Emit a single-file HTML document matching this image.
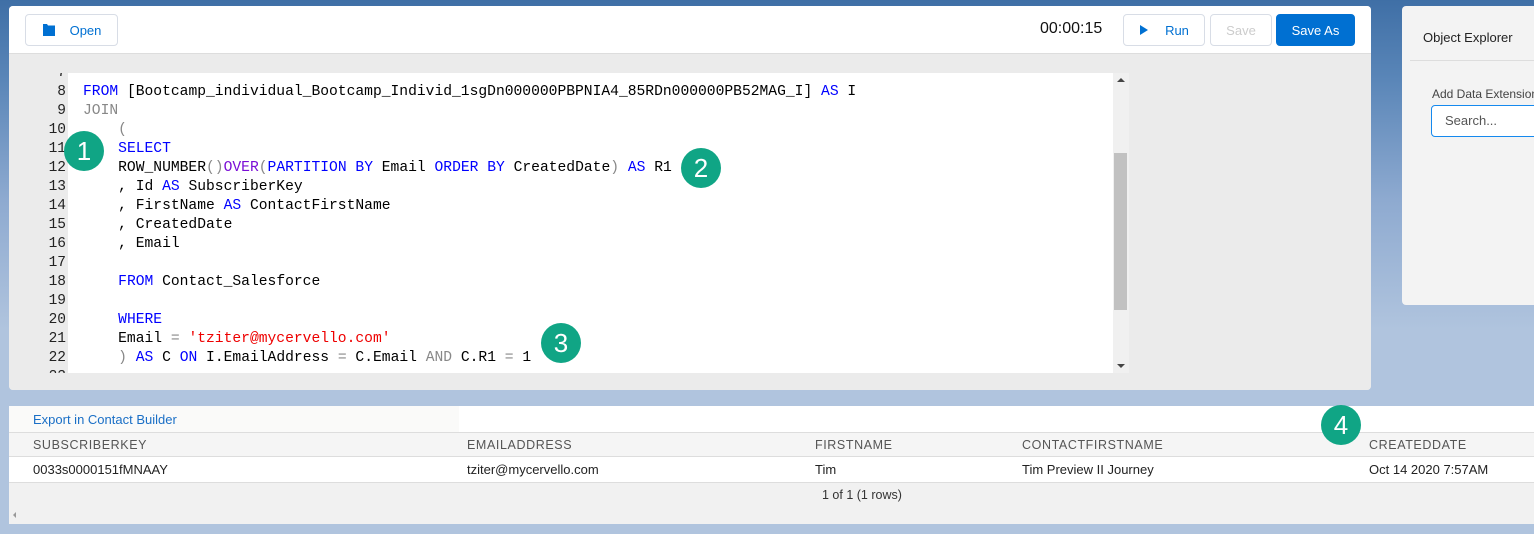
<!DOCTYPE html>
<html><head><style>
*{margin:0;padding:0;box-sizing:border-box}
body{width:1534px;height:534px;overflow:hidden;position:relative;font-family:"Liberation Sans",sans-serif;background:linear-gradient(180deg,#3f6fa6 0px,#5a86b8 80px,#8eaad0 200px,#b0c4de 330px,#b0c4de 534px)}
.a{position:absolute}
.btn{position:absolute;border:1px solid #d8dde6;border-radius:4px;background:#fff;font-size:13px;color:#0070d2;display:flex;align-items:center;justify-content:center}
.code{position:absolute;left:83px;font-family:"Liberation Mono",monospace;font-size:14.65px;line-height:19px;white-space:pre;color:#000}
.ln{position:absolute;left:30px;width:36px;text-align:right;font-family:"Liberation Mono",monospace;font-size:14.5px;line-height:19px;color:#222}
.k{color:#00f}.g{color:#888}.p{color:#7a0dd6}.s{color:#e00}
.c{position:absolute;width:40px;height:40px;border-radius:50%;background:#10a585;color:#fff;font-size:26px;display:flex;align-items:center;justify-content:center}
.th{position:absolute;top:438px;font-size:12.5px;letter-spacing:.6px;color:#555}
.td{position:absolute;top:462px;font-size:13px;color:#222}
</style></head><body>
<div class="a" style="left:9px;top:6px;width:1362px;height:384px;background:#ebebeb;border-radius:4px"></div>
<div class="a" style="left:9px;top:6px;width:1362px;height:48px;background:#fff;border-bottom:1px solid #ddd;border-radius:4px 4px 0 0"></div>
<div class="btn" style="left:25px;top:14px;width:93px;height:32px"><svg width="14" height="14" viewBox="0 0 14 14" style="margin-right:14px"><path d="M1 1h4l1 1.5h7V13H1z" fill="#0070d2"/></svg>Open</div>
<div class="a" style="left:1040px;top:20px;font-size:16px;color:#111">00:00:15</div>
<div class="btn" style="left:1123px;top:14px;width:82px;height:32px"><svg width="10" height="12" style="margin-right:16px"><path d="M1 1l8 5-8 5z" fill="#0070d2"/></svg>Run</div>
<div class="btn" style="left:1210px;top:14px;width:62px;height:32px;color:#ccc">Save</div>
<div class="btn" style="left:1276px;top:14px;width:79px;height:32px;background:#0070d2;border-color:#0070d2;color:#fff">Save As</div>
<div class="a" style="left:68px;top:73px;width:1061px;height:300px;background:#fff;overflow:hidden">
<div class="a" style="right:0;top:0;width:16px;height:300px;background:#f0f0f0"></div>
<div class="a" style="right:2px;top:80px;width:13px;height:157px;background:#c1c1c1"></div>
<div class="a" style="right:4px;top:5px;width:0;height:0;border:4px solid transparent;border-bottom-color:#444;border-top:0"></div>
<div class="a" style="right:4px;bottom:5px;width:0;height:0;border:4px solid transparent;border-top-color:#444;border-bottom:0"></div>
</div>
<div class="a" style="left:0;top:73px;width:68px;height:300px;overflow:hidden">
<div class="ln" style="top:-9px">7<br>8<br>9<br>10<br>11<br>12<br>13<br>14<br>15<br>16<br>17<br>18<br>19<br>20<br>21<br>22<br>23</div>
</div>
<div class="code" style="top:83px"><span class="k">FROM</span> [Bootcamp_individual_Bootcamp_Individ_1sgDn000000PBPNIA4_85RDn000000PB52MAG_I] <span class="k">AS</span> I
<span class="g">JOIN</span>
    <span class="g">(</span>
    <span class="k">SELECT</span>
    ROW_NUMBER<span class="g">()</span><span class="p">OVER</span><span class="g">(</span><span class="k">PARTITION BY</span> Email <span class="k">ORDER BY</span> CreatedDate<span class="g">)</span> <span class="k">AS</span> R1
    , Id <span class="k">AS</span> SubscriberKey
    , FirstName <span class="k">AS</span> ContactFirstName
    , CreatedDate
    , Email

    <span class="k">FROM</span> Contact_Salesforce

    <span class="k">WHERE</span>
    Email <span class="g">=</span> <span class="s">'tziter@mycervello.com'</span>
    <span class="g">)</span> <span class="k">AS</span> C <span class="k">ON</span> I.EmailAddress <span class="g">=</span> C.Email <span class="g">AND</span> C.R1 <span class="g">=</span> 1</div>
<div class="a" style="left:9px;top:373px;width:1362px;height:17px;background:#ebebeb;border-radius:0 0 4px 4px"></div>
<div class="a" style="left:1402px;top:6px;width:140px;height:299px;background:#f3f3f3;border-radius:4px"></div>
<div class="a" style="left:1423px;top:30px;font-size:13px;color:#222">Object Explorer</div>
<div class="a" style="left:1410px;top:60px;width:130px;height:1px;background:#ddd"></div>
<div class="a" style="left:1432px;top:87px;font-size:12px;color:#444;white-space:nowrap">Add Data Extension</div>
<div class="a" style="left:1431px;top:105px;width:110px;height:32px;background:#fff;border:1px solid #1589ee;border-radius:4px;font-size:13px;color:#555;padding:7px 0 0 13px">Search...</div>
<div class="a" style="left:9px;top:406px;width:1525px;height:118px;background:#f1f1f1"></div>
<div class="a" style="left:9px;top:406px;width:450px;height:26px;background:#fafaf9"></div>
<div class="a" style="left:459px;top:406px;width:1075px;height:26px;background:#fff"></div>
<div class="a" style="left:33px;top:412px;font-size:13px;color:#1a6fc6">Export in Contact Builder</div>
<div class="a" style="left:9px;top:432px;width:1525px;height:25px;background:#f5f5f5;border-top:1px solid #ddd;border-bottom:1px solid #ddd"></div>
<div class="a" style="left:9px;top:457px;width:1525px;height:26px;background:#fff;border-bottom:1px solid #ddd"></div>
<div class="th" style="left:33px">SUBSCRIBERKEY</div>
<div class="th" style="left:467px">EMAILADDRESS</div>
<div class="th" style="left:815px">FIRSTNAME</div>
<div class="th" style="left:1022px">CONTACTFIRSTNAME</div>
<div class="th" style="left:1369px">CREATEDDATE</div>
<div class="td" style="left:33px">0033s0000151fMNAAY</div>
<div class="td" style="left:467px">tziter@mycervello.com</div>
<div class="td" style="left:815px">Tim</div>
<div class="td" style="left:1022px">Tim Preview II Journey</div>
<div class="td" style="left:1369px">Oct 14 2020 7:57AM</div>
<div class="a" style="left:822px;top:488px;font-size:12.5px;color:#333">1 of 1 (1 rows)</div>
<div class="a" style="left:13px;top:512px;width:0;height:0;border:3px solid transparent;border-right-color:#999;border-left:0"></div>
<div class="c" style="left:64px;top:131px">1</div>
<div class="c" style="left:681px;top:148px">2</div>
<div class="c" style="left:541px;top:323px">3</div>
<div class="c" style="left:1321px;top:405px">4</div>
</body></html>
